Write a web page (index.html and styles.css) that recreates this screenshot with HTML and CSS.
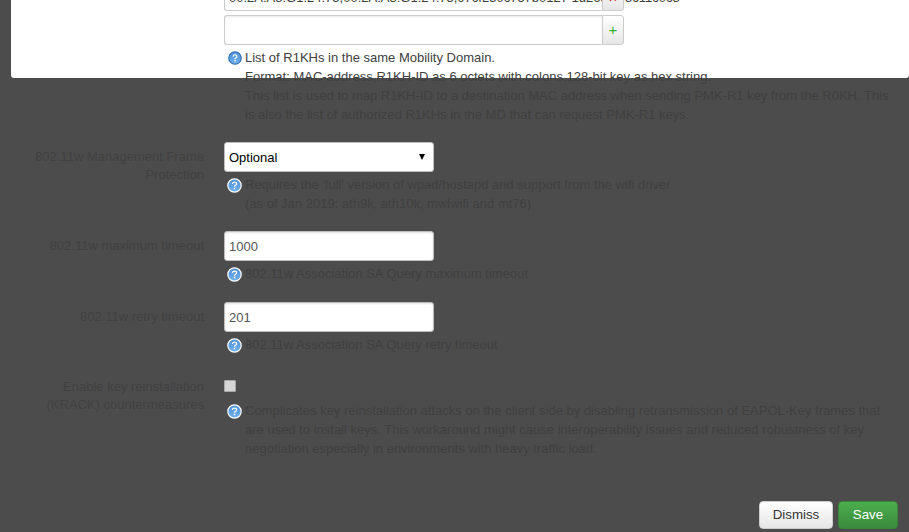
FILE: index.html
```html
<!DOCTYPE html>
<html lang="en">
<head>
<meta charset="utf-8">
<title>Wireless security</title>
<link rel="stylesheet" href="styles.css">
</head>
<body>
<div class="panel"></div>
<main class="form">
  <div class="row top-row">
    <div class="label"></div>
    <div class="field">
      <div class="dyn">
        <div class="dyn-input clipped"><span class="dyn-text">00:2A:A8:G1:24:75,00:2A:A8:G1:24:75,97cf230c757b0127 1d263</span><span class="dyn-rest">3c11c0c3</span></div>
        <div class="dyn-btn remove">×</div>
      </div>
      <div class="dyn">
        <div class="dyn-input"></div>
        <div class="dyn-btn add">+</div>
      </div>
      <div class="help help-first">
        <svg class="help-icon on-light" viewBox="0 0 15 15"><use href="#q"/></svg>
        <p>List of R1KHs in the same Mobility Domain.<br>Format: MAC-address,R1KH-ID as 6 octets with colons,128-bit key as hex string.<br>This list is used to map R1KH-ID to a destination MAC address when sending PMK-R1 key from the R0KH. This is also the list of authorized R1KHs in the MD that can request PMK-R1 keys.</p>
      </div>
    </div>
  </div>

  <div class="row row-select">
    <div class="label">802.11w Management Frame Protection</div>
    <div class="field">
      <div class="select"><span>Optional</span><span class="caret"></span></div>
      <div class="help">
        <svg class="help-icon" viewBox="0 0 15 15"><use href="#q"/></svg>
        <p>Requires the 'full' version of wpad/hostapd and support from the wifi driver<br>(as of Jan 2019: ath9k, ath10k, mwlwifi and mt76)</p>
      </div>
    </div>
  </div>

  <div class="row row-max">
    <div class="label">802.11w maximum timeout</div>
    <div class="field">
      <div class="input">1000</div>
      <div class="help">
        <svg class="help-icon" viewBox="0 0 15 15"><use href="#q"/></svg>
        <p>802.11w Association SA Query maximum timeout</p>
      </div>
    </div>
  </div>

  <div class="row row-retry">
    <div class="label">802.11w retry timeout</div>
    <div class="field">
      <div class="input">201</div>
      <div class="help">
        <svg class="help-icon" viewBox="0 0 15 15"><use href="#q"/></svg>
        <p>802.11w Association SA Query retry timeout</p>
      </div>
    </div>
  </div>

  <div class="row row-krack">
    <div class="label">Enable key reinstallation (KRACK) countermeasures</div>
    <div class="field">
      <div class="check"></div>
      <div class="help help-check">
        <svg class="help-icon" viewBox="0 0 15 15"><use href="#q"/></svg>
        <p>Complicates key reinstallation attacks on the client side by disabling retransmission of EAPOL-Key frames that are used to install keys. This workaround might cause interoperability issues and reduced robustness of key negotiation especially in environments with heavy traffic load.</p>
      </div>
    </div>
  </div>
</main>
<footer class="actions">
  <div class="btn">Dismiss</div>
  <div class="btn save">Save</div>
</footer>
<svg class="defs" width="0" height="0" aria-hidden="true">
  <defs>
    <linearGradient id="qg" x1="0" y1="0" x2="0" y2="1">
      <stop offset="0" stop-color="#4a8fd8"/>
      <stop offset="1" stop-color="#74b2ec"/>
    </linearGradient>
    <g id="q">
      <circle cx="7.5" cy="7.5" r="6.7" fill="url(#qg)" stroke="currentColor" stroke-width="1.2"/>
      <path d="M5.4 6c.1-1.2 1-1.9 2.1-1.9 1.2 0 2.1.7 2.1 1.7 0 1.5-2.1 1.5-2.1 3" fill="none" stroke="#fff" stroke-width="1.3"/>
      <rect x="6.8" y="9.7" width="1.5" height="1.5" fill="#fff"/>
    </g>
  </defs>
</svg>
</body>
</html>
```
FILE: styles.css
```css
* { box-sizing: border-box; }
html, body { height: 100%; }
body {
  margin: 0;
  height: 532px;
  overflow: hidden;
  position: relative;
  background: #4c4c4c;
  color: #404040;
  font-family: "Liberation Sans", Arial, sans-serif;
  font-size: 13px;
  line-height: 19px;
}
.panel {
  position: absolute;
  left: 11px;
  right: 0;
  top: -20px;
  height: 98px;
  background: #fff;
  border-radius: 3px;
}
.form {
  position: relative;
  margin-top: -19px;
  padding-left: 11px;
  width: 909px;
}
.row { display: flex; }
.label {
  width: 193px;
  margin-right: 20px;
  flex: none;
  text-align: right;
  line-height: 18px;
  padding-top: 6px;
  color: #414141;
}
.field { width: 665px; flex: none; }
.dyn { display: flex; width: 400px; height: 30px; margin-bottom: 4px; }
.dyn-input {
  flex: 1;
  height: 30px;
  min-width: 0;
  background: #fff;
  border: 1px solid #ccc;
  border-right: 0;
  border-radius: 3px 0 0 3px;
  padding: 6px 4px;
  white-space: nowrap;
  position: relative;
  box-shadow: inset 0 1px 2px rgba(0,0,0,.08);
}
.dyn-text { color: #404040; }
.dyn-rest { position: absolute; left: 400px; top: 6px; }
.dyn-btn {
  width: 22px;
  height: 30px;
  flex: none;
  border: 1px solid #ccc;
  border-radius: 0 3px 3px 0;
  background: linear-gradient(#fff, #e6e6e6);
  text-align: center;
  font-size: 15px;
  line-height: 28px;
}
.add { color: #35b52d; }
.remove { color: #d9362f; position: relative; line-height: 32px; }
.help { display: flex; margin-top: 3px; line-height: 19px; }
.help-first { margin-top: -1px; }
.help p { margin: 0; width: 645px; }
.help-icon {
  flex: none;
  width: 15px;
  height: 15px;
  margin: 3px 3px 0 3px;
  color: #fff;
}
.help-icon.on-light { color: #2f6fb5; width: 14px; height: 14px; margin: 3px 3px 0 4px; }
.row-select { margin-top: 18px; }
.row-max { margin-top: 18px; }
.row-retry { margin-top: 19px; }
.row-krack { margin-top: 18px; }
.select, .input {
  width: 210px;
  height: 30px;
  background: #fff;
  border-radius: 3px;
  padding: 5px 4px;
  border: 1px solid #bdbdbd;
}
.select {
  display: flex;
  justify-content: space-between;
  align-items: center;
  color: #000;
}
.input { color: #555; box-shadow: inset 0 1px 2px rgba(0,0,0,.12); }
.caret {
  width: 0;
  height: 0;
  margin-right: 4px;
  border-left: 3.5px solid transparent;
  border-right: 3.5px solid transparent;
  border-top: 6px solid #000;
}
.check {
  width: 12px;
  height: 12px;
  margin-top: 8px;
  background: #d5d5d5;
  border: 1px solid #a8a8a8;
  border-radius: 1px;
}
.help-check { margin-top: 9px; }
.actions {
  position: absolute;
  right: 11px;
  bottom: 3px;
  display: flex;
  gap: 5px;
}
.btn {
  width: 74px;
  height: 28px;
  text-align: center;
  line-height: 26px;
  font-size: 13.3px;
  border: 1px solid #ccc;
  border-radius: 4px;
  background: linear-gradient(#fff, #e6e6e6);
  color: #333;
}
.save {
  width: 60px;
  border-color: #398439;
  background: linear-gradient(#4cae4c, #398b3d);
  color: #fff;
}
.defs { position: absolute; }
```
